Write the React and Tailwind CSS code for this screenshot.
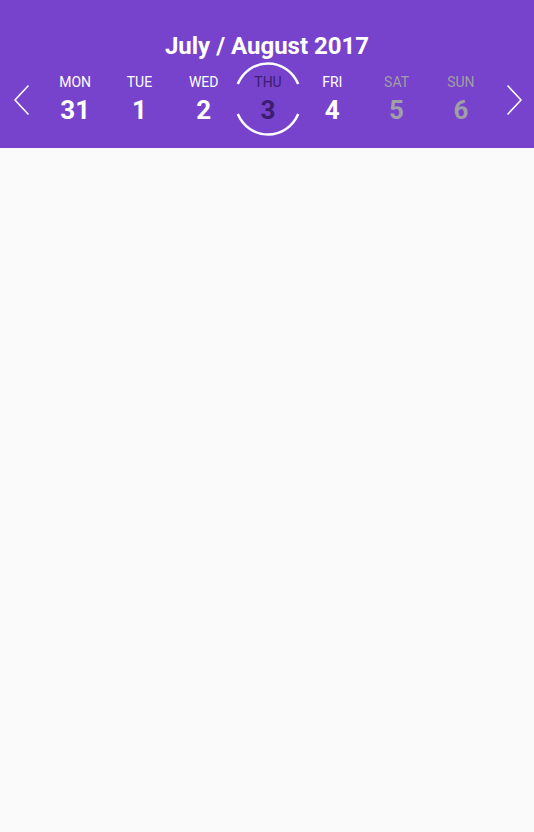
import React from "react";

const days = [
  { name: "MON", num: "31" },
  { name: "TUE", num: "1" },
  { name: "WED", num: "2" },
  { name: "THU", num: "3", selected: true },
  { name: "FRI", num: "4" },
  { name: "SAT", num: "5", weekend: true },
  { name: "SUN", num: "6", weekend: true },
];

const Chevron = ({ dir }) => (
  <svg width="20" height="32" viewBox="0 0 20 32" fill="none">
    <path
      d={dir === "left" ? "M16 2 L3 16 L16 30" : "M4 2 L17 16 L4 30"}
      stroke="white"
      strokeWidth="1.6"
      strokeLinecap="round"
      strokeLinejoin="round"
    />
  </svg>
);

const SelectedRing = () => (
  <svg
    className="absolute left-1/2 top-[calc(50%-1px)] -translate-x-1/2 -translate-y-1/2 pointer-events-none"
    width="72"
    height="74"
    viewBox="0 0 72 74"
    fill="none"
  >
    {/* top arc */}
    <path d="M5.8 22 A33 34.5 0 0 1 66.2 22" stroke="white" strokeWidth="2.5" />
    {/* bottom arc */}
    <path d="M5.8 52 A33 34.5 0 0 0 66.2 52" stroke="white" strokeWidth="2.5" />
  </svg>
);

export default function App() {
  return (
    <div className="w-[534px] h-[832px] bg-[#fafafa] font-['Roboto',sans-serif]">
      {/* HEADER */}
      <div className="h-[148px] bg-[#7743cc] pt-[31px]">
        <div className="text-center text-white text-[24px] font-bold leading-[30px]">
          July / August 2017
        </div>

        <div className="flex items-center mt-[1px]">
          <div className="w-[43px] flex justify-center">
            <Chevron dir="left" />
          </div>

          <div className="grid grid-cols-7 w-[450px]">
            {days.map((d) => (
              <div
                key={d.name}
                className="relative flex flex-col items-center h-[76px] justify-center"
              >
                {d.selected && <SelectedRing />}
                <span
                  className={`text-[14px] leading-[20px] ${
                    d.selected
                      ? "text-[#3b1c70]"
                      : d.weekend
                      ? "text-[#a09ea6]"
                      : "text-white"
                  }`}
                >
                  {d.name}
                </span>
                <span
                  className={`text-[26px] font-bold leading-[36px] ${
                    d.selected
                      ? "text-[#3b1c70]"
                      : d.weekend
                      ? "text-[#a09ea6]"
                      : "text-white"
                  }`}
                >
                  {d.num}
                </span>
              </div>
            ))}
          </div>

          <div className="w-[41px] flex justify-center">
            <Chevron dir="right" />
          </div>
        </div>
      </div>
    </div>
  );
}
